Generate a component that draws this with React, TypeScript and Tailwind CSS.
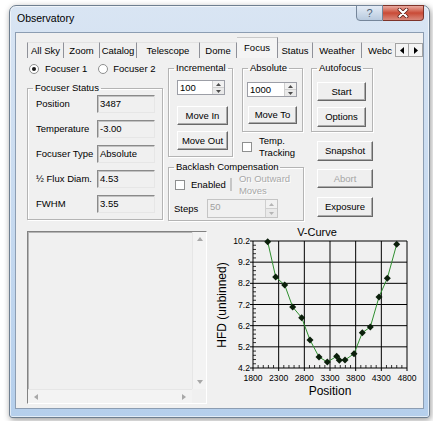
import React from "react";

type Kids = { children?: React.ReactNode; className?: string };

function Radio({ checked }: { checked?: boolean }) {
  return (
    <span className="flex items-center justify-center w-[10px] h-[10px] rounded-full bg-white border border-[#8e8f8f]">
      {checked && <span className="w-[4px] h-[4px] rounded-full bg-[#1b1b1b]" />}
    </span>
  );
}

function Check({ disabled }: { disabled?: boolean }) {
  return (
    <span
      className={`w-[10px] h-[10px] shrink-0 border ${
        disabled ? "border-[#c6c6c6] bg-[#f7f7f7]" : "border-[#8e8f8f] bg-white"
      }`}
    />
  );
}

function Group({ title, className, children }: Kids & { title: string }) {
  return (
    <fieldset
      className={`border border-[#b4b4b4] shadow-[1px_1px_0_#fff,inset_1px_1px_0_#fff] ${className}`}
    >
      <legend className="ml-[5px] px-[2px] text-[9.5px] leading-[12px]">{title}</legend>
      {children}
    </fieldset>
  );
}

function Field({ value }: { value: string }) {
  return (
    <div className="h-[18px] w-[58px] border border-t-[#8a8a8a] border-l-[#8a8a8a] border-r-[#e6e6e6] border-b-[#e6e6e6] shadow-[inset_1px_1px_0_#c2c2c2] pl-[2px] text-[9.5px] leading-[15px]">
      {value}
    </div>
  );
}

function Spin({ value, className, disabled }: { value: string; className?: string; disabled?: boolean }) {
  const fill = disabled ? "#b5b5b5" : "#4d4d4d";
  return (
    <div
      className={`flex border ${
        disabled ? "border-[#c4c4c4] bg-[#f0f0f0] text-[#a0a0a0]" : "border-[#9c9ea6] bg-white text-black"
      } ${className}`}
    >
      <span className="flex-1 pl-[2px] text-[9.5px] leading-[13px]">{value}</span>
      <span className="flex flex-col w-[12px] border-l border-[#cfcfcf]">
        <span className="flex-1 flex items-center justify-center bg-[#f1f1f1] border-b border-[#cfcfcf]">
          <svg width="5" height="3" viewBox="0 0 5 3">
            <path d="M0 3 L2.5 0 L5 3Z" fill={fill} />
          </svg>
        </span>
        <span className="flex-1 flex items-center justify-center bg-[#e9e9e9]">
          <svg width="5" height="3" viewBox="0 0 5 3">
            <path d="M0 0 L5 0 L2.5 3Z" fill={fill} />
          </svg>
        </span>
      </span>
    </div>
  );
}

function Btn({ label, className, disabled }: { label: string; className?: string; disabled?: boolean }) {
  return (
    <div
      className={`flex items-center justify-center bg-[#efefef] border border-t-white border-l-white border-r-[#686868] border-b-[#686868] shadow-[inset_-1px_-1px_0_#ababab] text-[9.5px] leading-[12px] ${
        disabled ? "text-[#a6a6a6]" : "text-black"
      } ${className}`}
    >
      {label}
    </div>
  );
}

const tabs = [
  { label: "All Sky", w: "w-[37px] border-l" },
  { label: "Zoom", w: "w-[36px]" },
  { label: "Catalog", w: "w-[37px]" },
  { label: "Telescope", w: "w-[63px]" },
  { label: "Dome", w: "w-[37px]" },
  { label: "Focus", w: "w-[41px]", sel: true },
  { label: "Status", w: "w-[35px]" },
  { label: "Weather", w: "w-[49px]" },
  { label: "Webc", w: "w-[33px] border-r-0 justify-start pl-[6px]" },
];

const points: [number, number][] = [
  [53.7, 16.7], [61.7, 52], [70.7, 60], [78.7, 82], [87.7, 92.7], [96, 115], [105, 132],
  [113.3, 137], [122.7, 131.3], [125.3, 135.3], [131, 135], [140, 128.7], [148.3, 107.7],
  [156.3, 102], [165, 72], [173.3, 53.3], [182.7, 19.3],
];

function VCurve() {
  const L = 39, R = 193, T = 16, B = 143;
  const xs = [0, 1, 2, 3, 4, 5, 6].map((i) => L + (i * (R - L)) / 6);
  const ys = [0, 1, 2, 3, 4, 5, 6].map((i) => T + (i * (B - T)) / 6);
  const xl = ["1800", "2300", "2800", "3300", "3800", "4300", "4800"];
  const yl = ["10.2", "9.2", "8.2", "7.2", "6.2", "5.2", "4.2"];
  const minor = Array.from({ length: 29 }, (_, k) => k + 1).filter((k) => k % 5 !== 0);
  return (
    <svg width="206" height="178" viewBox="0 0 206 178" className="ml-[7px] shrink-0">
      <text x="103" y="11" fontSize="11" textAnchor="middle" fill="#000">V-Curve</text>
      {xs.map((x, i) => (
        <line key={"gx" + i} x1={x} y1={T} x2={x} y2={B + 3} stroke="#000" strokeWidth="1" />
      ))}
      {ys.map((y, i) => (
        <line key={"gy" + i} x1={L - 3} y1={y} x2={R} y2={y} stroke="#000" strokeWidth="1" />
      ))}
      {minor.map((k) => (
        <line key={"mx" + k} x1={L + (k * (R - L)) / 30} y1={B} x2={L + (k * (R - L)) / 30} y2={B - 3} stroke="#000" strokeWidth="0.8" />
      ))}
      {minor.map((k) => (
        <line key={"my" + k} x1={L} y1={T + (k * (B - T)) / 30} x2={L + 3} y2={T + (k * (B - T)) / 30} stroke="#000" strokeWidth="0.8" />
      ))}
      {yl.map((t, i) => (
        <text key={t} x={L - 3} y={ys[i] + 3} fontSize="8.6" textAnchor="end" fill="#000">{t}</text>
      ))}
      {xl.map((t, i) => (
        <text key={t} x={xs[i]} y={156} fontSize="8.6" textAnchor="middle" fill="#000">{t}</text>
      ))}
      <text x="116" y="170" fontSize="12" textAnchor="middle" fill="#000">Position</text>
      <text x="12" y="80" fontSize="12" textAnchor="middle" fill="#000" transform="rotate(-90 12 80)">HFD (unbinned)</text>
      <polyline points={points.map((p) => p.join(",")).join(" ")} fill="none" stroke="#2f8f2f" strokeWidth="1" />
      {points.map(([x, y], i) => (
        <polygon key={i} points={`${x},${y - 3.5} ${x + 3.5},${y} ${x},${y + 3.5} ${x - 3.5},${y}`} fill="#0b1f0b" />
      ))}
    </svg>
  );
}

function ListBox() {
  return (
    <div className="mt-[6px] w-[180px] h-[173px] flex flex-col shrink-0 bg-[#f0f0f0] border border-t-[#828282] border-l-[#828282] border-r-white border-b-white shadow-[inset_1px_1px_0_#b5b5b5]">
      <div className="flex flex-1">
        <div className="flex-1" />
        <div className="w-[14px] flex flex-col items-center justify-between py-[5px] bg-[#f3f3f3] border-l border-[#e6e6e6]">
          <svg width="6" height="4" viewBox="0 0 6 4"><path d="M0 4 L3 0 L6 4Z" fill="#a8a8a8" /></svg>
          <svg width="6" height="4" viewBox="0 0 6 4"><path d="M0 0 L6 0 L3 4Z" fill="#a8a8a8" /></svg>
        </div>
      </div>
      <div className="flex h-[14px]">
        <div className="flex-1 flex items-center justify-between px-[6px] bg-[#f3f3f3] border-t border-[#e6e6e6]">
          <svg width="4" height="6" viewBox="0 0 4 6"><path d="M4 0 L0 3 L4 6Z" fill="#a8a8a8" /></svg>
          <svg width="4" height="6" viewBox="0 0 4 6"><path d="M0 0 L4 3 L0 6Z" fill="#a8a8a8" /></svg>
        </div>
        <div className="w-[14px] bg-[#f0f0f0]" />
      </div>
    </div>
  );
}

export default function App() {
  return (
    <div className="w-[433px] h-[421px] bg-white pt-[5px] pl-[9px] font-['Liberation_Sans',Arial,sans-serif] text-black text-[9.5px] leading-[12px]">
      <div className="flex flex-col w-[421px] h-[413px] rounded-t-[7px] rounded-b-[3px] border border-[#6f7f90] bg-linear-to-b from-[#d9e5f3] to-[#b5cfec] shadow-[1px_2px_6px_rgba(0,0,0,0.4),inset_0_0_0_1px_rgba(255,255,255,0.6)]">
        {/* title bar */}
        <div className="flex h-[26px] pl-[7px] pr-[5px]">
          <span className="pt-[6px] text-[10.5px] leading-[13px]">Observatory</span>
          <div className="ml-auto flex -mt-[1px] h-[16px]">
            <div className="w-[27px] flex items-center justify-center rounded-bl-[4px] border border-[#75869a] bg-linear-to-b from-[#e4ecf6] to-[#b8cade] text-[11px] leading-[12px] text-[#4f6275]">
              ?
            </div>
            <div className="w-[41px] flex items-center justify-center rounded-br-[4px] border border-l-0 border-[#7d3329] bg-linear-to-b from-[#e8a99f] via-[#c94a36] to-[#d8877a]">
              <svg width="12" height="10" viewBox="0 0 12 10">
                <path d="M2.5 1.5 L9.5 8.5 M9.5 1.5 L2.5 8.5" stroke="#5b1d16" strokeWidth="3.8" strokeLinecap="round" />
                <path d="M2.5 1.5 L9.5 8.5 M9.5 1.5 L2.5 8.5" stroke="#fff" strokeWidth="2.2" strokeLinecap="round" />
              </svg>
            </div>
          </div>
        </div>

        {/* client */}
        <div className="flex-1 mx-[5px] mb-[8px] flex flex-col border border-[#8c9db2] bg-[#f0f0f0]">
          {/* tab strip */}
          <div className="flex items-end h-[25px] pl-[11px]">
            <div className="flex items-end w-[368px]">
              {tabs.map((t) => (
                <div
                  key={t.label}
                  className={`shrink-0 flex items-center justify-center border-r border-[#8f9199] ${t.w} ${
                    t.sel ? "h-[21px] border-t border-t-[#c9c9c9] bg-[#f4f4f4]" : "h-[16px] border-t border-t-[#e2e2e2]"
                  } ${t.label === "All Sky" ? "border-l-[#8f9199]" : ""}`}
                >
                  {t.label}
                </div>
              ))}
            </div>
            <div className="flex mb-[1px]">
              <div className="w-[14px] h-[14px] flex items-center justify-center border border-[#a3a3a3] bg-[#f4f4f4]">
                <svg width="4" height="7" viewBox="0 0 4 7"><path d="M4 0 L0 3.5 L4 7Z" fill="#000" /></svg>
              </div>
              <div className="w-[14px] h-[14px] flex items-center justify-center border border-l-0 border-[#a3a3a3] bg-[#f4f4f4]">
                <svg width="4" height="7" viewBox="0 0 4 7"><path d="M0 0 L4 3.5 L0 7Z" fill="#000" /></svg>
              </div>
            </div>
          </div>

          {/* top section */}
          <div className="flex mt-[4px] pl-[11px]">
            {/* column A */}
            <div className="flex flex-col w-[136px]">
              <div className="flex items-center h-[14px] pl-[2px]">
                <Radio checked />
                <span className="ml-[6px]">Focuser 1</span>
                <span className="ml-[11px]">
                  <Radio />
                </span>
                <span className="ml-[5px]">Focuser 2</span>
              </div>
              <Group title="Focuser Status" className="mt-[6px] w-[136px] h-[138px]">
                <div className="flex flex-col gap-[7px] pt-[1px] pl-[8px]">
                  {[
                    ["Position", "3487"],
                    ["Temperature", "-3.00"],
                    ["Focuser Type", "Absolute"],
                    ["½ Flux Diam.", "4.53"],
                    ["FWHM", "3.55"],
                  ].map(([l, v]) => (
                    <div key={l} className="flex items-center">
                      <span className="w-[61px]">{l}</span>
                      <Field value={v} />
                    </div>
                  ))}
                </div>
              </Group>
            </div>

            {/* column B */}
            <div className="flex flex-col ml-[5px] w-[136px]">
              <div className="flex items-start">
                <Group title="Incremental" className="w-[65px] h-[95px]">
                  <div className="flex flex-col pl-[8px] pt-[6px]">
                    <Spin value="100" className="w-[48px] h-[15px]" />
                    <Btn label="Move In" className="mt-[11px] w-[51px] h-[19px]" />
                    <Btn label="Move Out" className="mt-[6px] w-[51px] h-[19px]" />
                  </div>
                </Group>
                <div className="flex flex-col ml-[9px]">
                  <Group title="Absolute" className="w-[61px] h-[70px]">
                    <div className="flex flex-col pl-[4px] pt-[8px]">
                      <Spin value="1000" className="w-[50px] h-[15px]" />
                      <Btn label="Move To" className="mt-[9px] ml-[1px] w-[49px] h-[18px]" />
                    </div>
                  </Group>
                  <div className="flex items-center mt-[3px]">
                    <Check />
                    <div className="ml-[7px]">
                      Temp.
                      <br />
                      Tracking
                    </div>
                  </div>
                </div>
              </div>
              <Group title="Backlash Compensation" className="mt-[2px] w-[136px] h-[60px]">
                <div className="flex items-center h-[24px] pl-[6px]">
                  <Check />
                  <span className="ml-[6px]">Enabled</span>
                  <span className="ml-[4px]">
                    <Check disabled />
                  </span>
                  <div className="ml-[7px] text-[#a8a8a8] [text-shadow:1px_1px_0_#fff]">
                    On Outward
                    <br />
                    Moves
                  </div>
                </div>
                <div className="flex items-center mt-[2px] pl-[5px]">
                  <span className="w-[33px]">Steps</span>
                  <Spin value="50" disabled className="w-[71px] h-[19px]" />
                </div>
              </Group>
            </div>

            {/* column C */}
            <div className="flex flex-col ml-[7px] w-[62px]">
              <Group title="Autofocus" className="w-[62px] h-[70px]">
                <div className="flex flex-col pl-[5px] pt-[8px]">
                  <Btn label="Start" className="w-[49px] h-[19px]" />
                  <Btn label="Options" className="mt-[6px] w-[49px] h-[20px]" />
                </div>
              </Group>
              <Btn label="Snapshot" className="mt-[9px] ml-[6px] w-[56px] h-[20px]" />
              <Btn label="Abort" disabled className="mt-[8px] ml-[6px] w-[56px] h-[19px]" />
              <Btn label="Exposure" className="mt-[9px] ml-[6px] w-[56px] h-[20px]" />
            </div>
          </div>

          {/* bottom section */}
          <div className="flex items-start mt-[4px] pl-[11px]">
            <ListBox />
            <VCurve />
          </div>
        </div>
      </div>
    </div>
  );
}
